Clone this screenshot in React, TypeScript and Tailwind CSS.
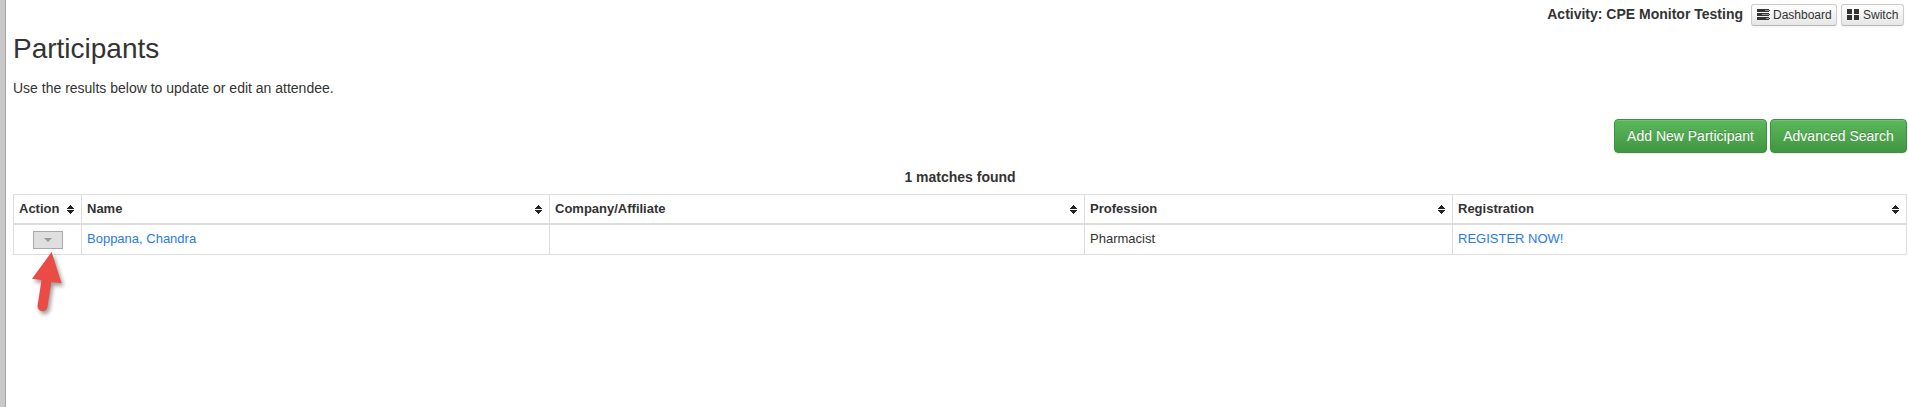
import type { ReactNode } from "react";
import clsx from "clsx";

interface Column {
  key: string;
  label: string;
  width: string;
}

const COLUMNS: Column[] = [
  { key: "action", label: "Action", width: "w-[68px]" },
  { key: "name", label: "Name", width: "w-[468px]" },
  { key: "company", label: "Company/Affiliate", width: "w-[535px]" },
  { key: "profession", label: "Profession", width: "w-[368px]" },
  { key: "registration", label: "Registration", width: "w-[454px]" },
];

const PARTICIPANTS = [
  { id: 1, name: "Boppana, Chandra", company: "", profession: "Pharmacist", registration: "REGISTER NOW!" },
];

function SortIcon() {
  return (
    <svg width="7" height="9" viewBox="0 0 7 9" className="mt-[2px] shrink-0" fill="#212529" shapeRendering="crispEdges">
      <path d="M3 0h1v1h1v1h1v1h1v1H0V3h1V2h1V1h1zM0 5h7v1H6v1H5v1H4v1H3V8H2V7H1V6H0z" />
    </svg>
  );
}

function DashboardIcon() {
  return (
    <svg width="13" height="11" viewBox="0 0 13 11" fill="#333" className="-mt-px shrink-0" shapeRendering="crispEdges">
      <path d="M0 0h12v1h1v1h-1v1H0zM0 4h12v1h1v1h-1v1H0zM0 8h12v1h1v1h-1v1H0z" />
      <path d="M8 1h4v1H8zM5 5h7v1H5zM9 9h3v1H9z" fill="#999" />
    </svg>
  );
}

function SwitchIcon() {
  return (
    <svg width="12" height="11" viewBox="0 0 12 11" fill="#333" className="-mt-px shrink-0" shapeRendering="crispEdges">
      <path d="M0 0h5v5H0zM7 0h5v5H7zM0 6h5v5H0zM7 6h5v5H7z" />
    </svg>
  );
}

function ToolbarButton({ icon, label, className }: { icon: ReactNode; label: string; className: string }) {
  return (
    <button
      type="button"
      className={clsx(
        "flex h-[22px] items-center rounded-[3px] border border-[#ccc] border-b-[#b8b8b8] bg-linear-to-b from-white to-[#e6e6e6] text-[12px] leading-[18px] shadow-[0_1px_2px_rgba(0,0,0,0.05)]",
        className,
      )}
    >
      {icon}
      <span>{label}</span>
    </button>
  );
}

function PrimaryButton({ label, className }: { label: string; className: string }) {
  return (
    <button
      type="button"
      className={clsx(
        "h-[34px] whitespace-nowrap rounded-[4px] border border-[#3e8f3e] bg-linear-to-b from-[#5cb85c] to-[#419641] text-[14px] leading-5 text-white shadow-[inset_0_1px_0_rgba(255,255,255,0.15),0_1px_1px_rgba(0,0,0,0.075)] [text-shadow:0_-1px_0_rgba(0,0,0,0.2)]",
        className,
      )}
    >
      {label}
    </button>
  );
}

// Callout arrow pointing at the row's action menu
function Pointer() {
  return (
    <svg width="44" height="72" viewBox="0 0 44 72" className="absolute left-[24px] top-[249px] overflow-visible drop-shadow-[2px_3px_2px_rgba(0,0,0,0.4)]">
      <path d="M27.6 3 37.6 34.3l-10.3-1.300L23.500 58A5 5 0 0 1 13.600 56.500L17.500 31 8 29.700z" fill="#ea4c45" />
    </svg>
  );
}

export default function App() {
  return (
    <div className="relative flex h-[407px] w-[1908px] overflow-hidden bg-white font-['Liberation_Sans',Arial,sans-serif] text-[#333]">
      <div className="w-[6px] shrink-0 border-r border-[#a5a5a5] bg-[#c9c9c9]" />
      <main className="flex w-[1902px] flex-col pl-[7px]">
        <header className="flex h-[26px] items-end justify-end pr-[4px]">
          <strong className="mr-[8px] text-[14px] leading-[23px]">Activity: CPE Monitor Testing</strong>
          <ToolbarButton icon={<DashboardIcon />} label="Dashboard" className="mr-[4px] w-[86px] gap-[3px] pl-[5px]" />
          <ToolbarButton icon={<SwitchIcon />} label="Switch" className="w-[63px] gap-[4px] pl-[5px]" />
        </header>

        <h1 className="mt-[5px] text-[28px] leading-[36px]">Participants</h1>
        <p className="mt-[11px] text-[14px] leading-[20px]">Use the results below to update or edit an attendee.</p>

        <div className="mt-[21px] flex justify-end gap-[3px] pr-px">
          <PrimaryButton label="Add New Participant" className="w-[153px]" />
          <PrimaryButton label="Advanced Search" className="w-[137px]" />
        </div>

        <div className="mt-[14px] h-[27px] pr-px text-center text-[14px] font-bold leading-[20px]">1 matches found</div>

        <table className="w-[1894px] table-fixed border-collapse border border-[#ddd] text-[13px] leading-[18px]">
          <thead>
            <tr className="h-[29px]">
              {COLUMNS.map((col) => (
                <th key={col.key} className={clsx("border border-b-[2px] border-[#ddd] px-[5px] py-0 text-left align-top", col.width)}>
                  <div className="flex items-start justify-between pr-[2px] pt-[5px]">
                    <span>{col.label}</span>
                    <span className="pt-[3px]">
                      <SortIcon />
                    </span>
                  </div>
                </th>
              ))}
            </tr>
          </thead>
          <tbody>
            {PARTICIPANTS.map((p) => (
              <tr key={p.id} className="h-[31px]">
                <td className="border border-[#ddd] p-0 align-top">
                  <button
                    type="button"
                    aria-label="Open actions"
                    className="ml-[19px] mt-[6px] flex h-[18px] w-[30px] items-center justify-center border border-[#aaa] bg-[#dfdfdf]"
                  >
                    <svg width="8" height="4" viewBox="0 0 8 4" fill="#999">
                      <path d="M0 0h8L4 4z" />
                    </svg>
                  </button>
                </td>
                <td className="border border-[#ddd] px-[5px] pt-[5px] pb-0 align-top">
                  <a className="text-[#2a7ae9]">{p.name}</a>
                </td>
                <td className="border border-[#ddd] px-[5px] pt-[5px] pb-0 align-top">{p.company}</td>
                <td className="border border-[#ddd] px-[5px] pt-[5px] pb-0 align-top">{p.profession}</td>
                <td className="border border-[#ddd] px-[5px] pt-[5px] pb-0 align-top">
                  <a className="text-[#2a7ae9]">{p.registration}</a>
                </td>
              </tr>
            ))}
          </tbody>
        </table>
      </main>
      <Pointer />
    </div>
  );
}
